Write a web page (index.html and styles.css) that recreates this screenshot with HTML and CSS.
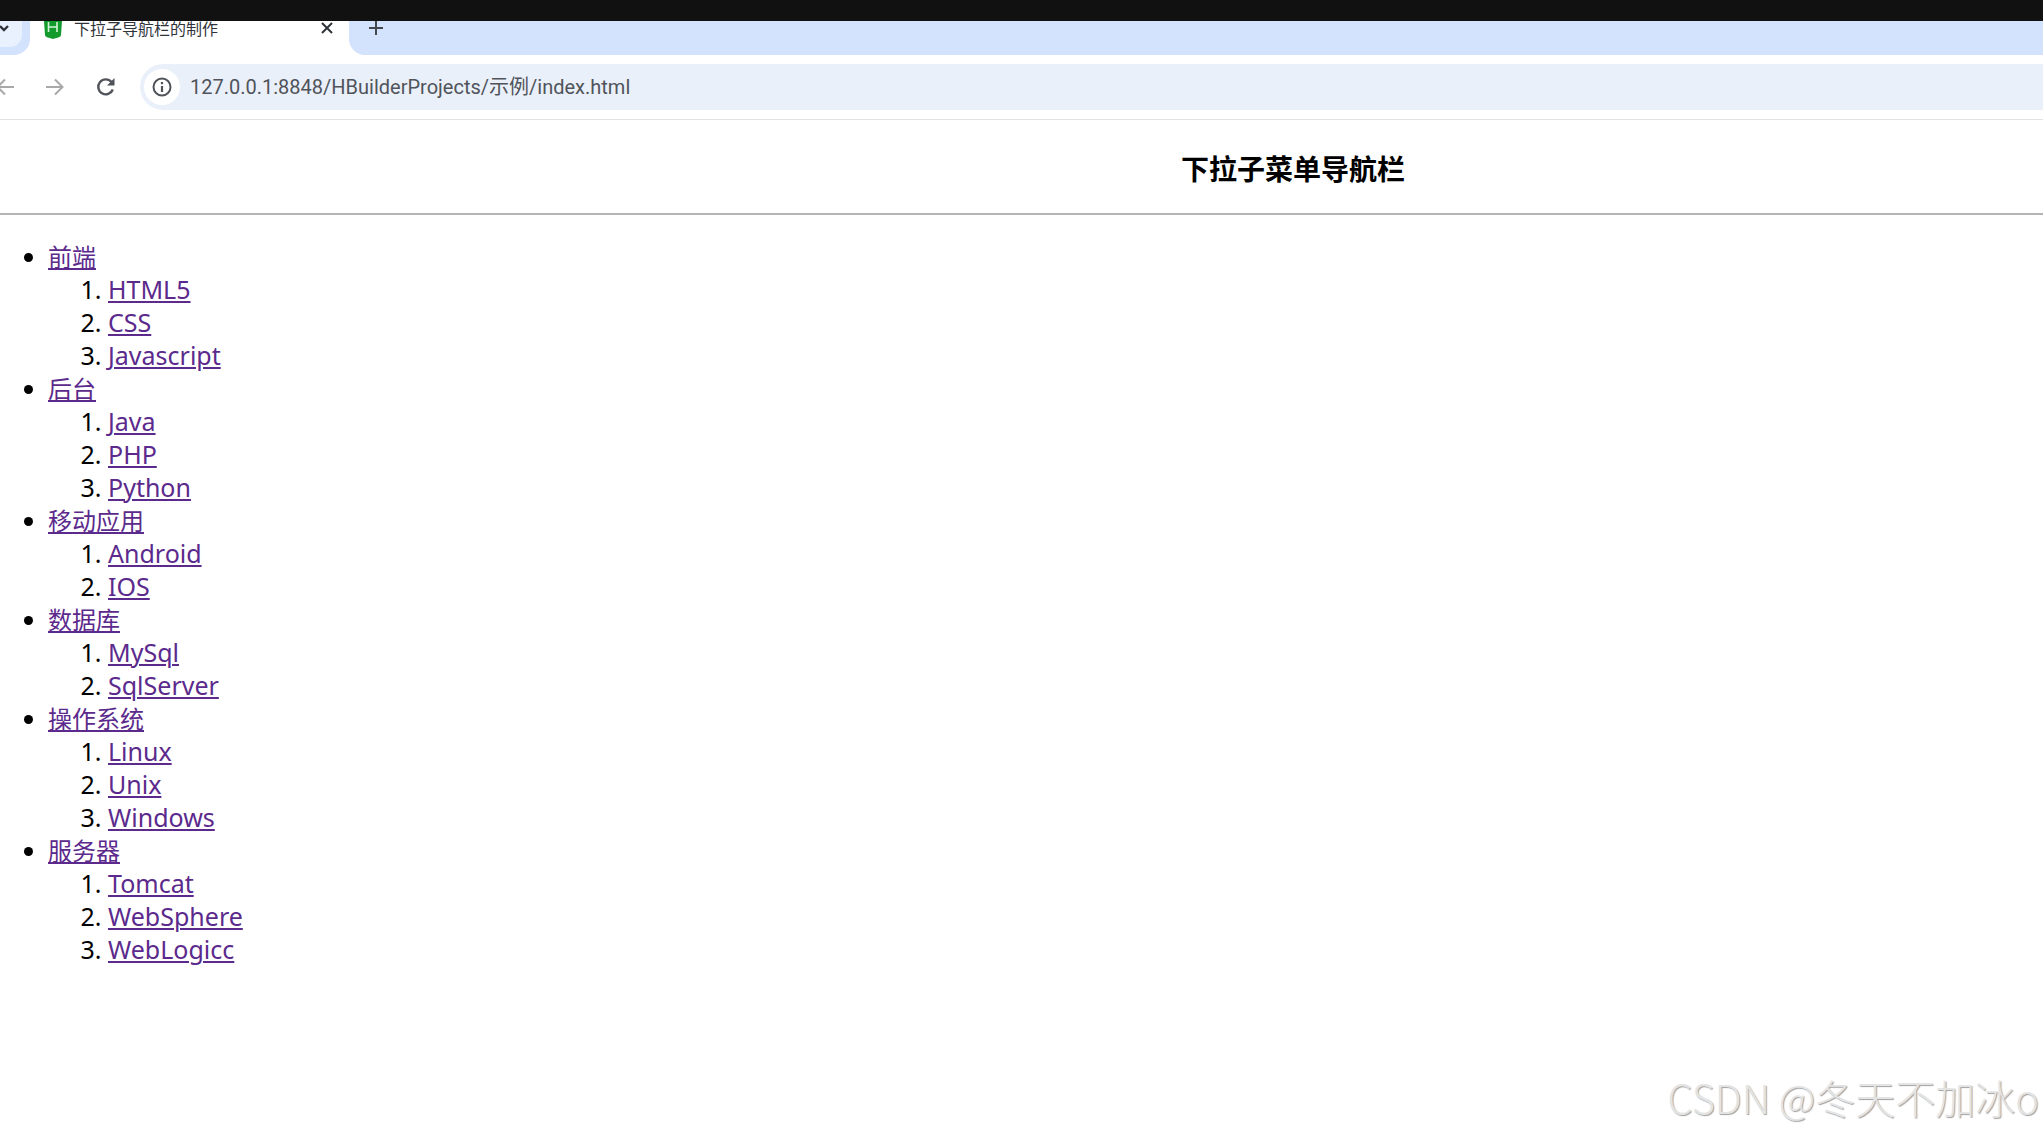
FILE: index.html
```html
<!DOCTYPE html>
<html lang="zh-CN">
<head>
    <meta charset="UTF-8">
    <meta name="viewport" content="width=device-width, initial-scale=1.0">
    <title>下拉子导航栏的制作</title>
    <link rel="stylesheet" href="styles.css">
</head>
<body>
    <header class="browser">
        <div class="tabs">
            <div class="tab-left">
                <button class="tab-search" aria-label="搜索标签页">
                    <svg width="12" height="12" viewBox="0 0 12 12"><path d="M0 3l4 4 4-4" fill="none" stroke="#30343a" stroke-width="2.4"/></svg>
                </button>
            </div>
            <div class="tab">
                <svg class="favicon" width="18" height="18" viewBox="0 0 18 18"><path d="M0 0h18l-1 14q0 1.500-2 2.200L9 18l-6-1.800Q1 15.500 1 14z" fill="#129a2c"/><path d="M4.500 1v10M13 1v10M4.500 6H13" fill="none" stroke="#d5f5d9" stroke-width="1.600"/></svg>
                <span class="tab-title">下拉子导航栏的制作</span>
                <button class="icon-button" aria-label="关闭">
                    <svg width="12" height="12" viewBox="0 0 12 12"><path d="M1 1l10 10M11 1L1 11" stroke="#30343a" stroke-width="2"/></svg>
                </button>
            </div>
            <div class="tab-rest">
                <button class="icon-button" aria-label="新标签页">
                    <svg width="16" height="14" viewBox="0 0 16 14"><path d="M8 0v14M1 7h14" stroke="#42474e" stroke-width="2"/></svg>
                </button>
            </div>
        </div>
        <div class="toolbar">
            <button class="icon-button" aria-label="后退">
                <svg width="18" height="18" viewBox="0 0 18 18"><path d="M18 9H2M9 1.500L1.500 9 9 16.500" fill="none" stroke="#a9a9a9" stroke-width="2"/></svg>
            </button>
            <button class="icon-button" aria-label="前进">
                <svg width="18" height="18" viewBox="0 0 18 18"><path d="M0 9h16M9 1.500L16.500 9 9 16.500" fill="none" stroke="#a9a9a9" stroke-width="2"/></svg>
            </button>
            <button class="icon-button" aria-label="刷新">
                <svg width="20" height="20" viewBox="0 0 20 20"><path d="M16.800 12.500A7.500 7.500 0 1 1 15.500 5l2 2.500" fill="none" stroke="#50545a" stroke-width="2.400"/><path d="M18.500 1v7.500H11z" fill="#50545a"/></svg>
            </button>
            <div class="address">
                <span class="site-info">
                    <svg width="20" height="20" viewBox="0 0 20 20"><circle cx="10" cy="10" r="8.500" fill="none" stroke="#50545a" stroke-width="2"/><path d="M10 9v6M10 5v2.300" stroke="#50545a" stroke-width="2.200"/></svg>
                </span>
                <input class="url" type="text" aria-label="地址" value="127.0.0.1:8848/HBuilderProjects/示例/index.html">
            </div>
        </div>
    </header>

    <main>
        <h3 class="title">下拉子菜单导航栏</h3>
        <hr>
        <ul class="nav">
            <li><a href="#">前端</a>
                <ol>
                    <li><a href="#">HTML5</a></li>
                    <li><a href="#">CSS</a></li>
                    <li><a href="#">Javascript</a></li>
                </ol>
            </li>
            <li><a href="#">后台</a>
                <ol>
                    <li><a href="#">Java</a></li>
                    <li><a href="#">PHP</a></li>
                    <li><a href="#">Python</a></li>
                </ol>
            </li>
            <li><a href="#">移动应用</a>
                <ol>
                    <li><a href="#">Android</a></li>
                    <li><a href="#">IOS</a></li>
                </ol>
            </li>
            <li><a href="#">数据库</a>
                <ol>
                    <li><a href="#">MySql</a></li>
                    <li><a href="#">SqlServer</a></li>
                </ol>
            </li>
            <li><a href="#">操作系统</a>
                <ol>
                    <li><a href="#">Linux</a></li>
                    <li><a href="#">Unix</a></li>
                    <li><a href="#">Windows</a></li>
                </ol>
            </li>
            <li><a href="#">服务器</a>
                <ol>
                    <li><a href="#">Tomcat</a></li>
                    <li><a href="#">WebSphere</a></li>
                    <li><a href="#">WebLogicc</a></li>
                </ol>
            </li>
        </ul>
    </main>

    <div class="watermark">CSDN @冬天不加冰o</div>
</body>
</html>
```
FILE: styles.css
```css
* {
    box-sizing: border-box;
}

body {
    margin: 0;
    min-height: 100vh;
    background-color: #fff;
    color: #000;
    font-family: "Noto Sans", "Noto Sans CJK SC", sans-serif;
    overflow: hidden;
}

button {
    padding: 0;
    border: none;
    background: none;
}

svg {
    display: block;
}

/* browser window */
.browser {
    border-top: 21px solid #111;
    border-bottom: 1px solid #e2e2e2;
}

.tabs {
    display: flex;
    height: 34px;
}

.tab-left {
    width: 30px;
    background-color: #d3e2fd;
    border-bottom-right-radius: 16px;
}

.tab-search {
    display: block;
    width: 22px;
    height: 26px;
    background-color: #e9f0fe;
    border-bottom-right-radius: 12px;
}

.tab-search svg {
    margin-bottom: 10px;
}

.tab {
    display: flex;
    align-items: flex-start;
    width: 319px;
    padding: 0 16px 0 14px;
}

.tab-title {
    flex: 1;
    margin-left: 12px;
    color: #30343a;
    font-size: 16px;
    line-height: 16px;
}

.tab .icon-button,
.tab-rest .icon-button {
    height: 14px;
}

.tab-rest {
    display: flex;
    align-items: flex-start;
    flex: 1;
    padding-left: 19px;
    background-color: #d3e2fd;
    border-bottom-left-radius: 16px;
}

.toolbar {
    display: flex;
    align-items: center;
    height: 64px;
    gap: 32px;
}

.toolbar .icon-button:first-child {
    margin-left: -4px;
}

.address {
    display: flex;
    flex: 1;
    align-items: center;
    height: 46px;
    margin-left: -8px;
    padding-left: 4px;
    background-color: #eaf0fa;
    border-radius: 23px 0 0 23px;
}

.site-info {
    display: flex;
    align-items: center;
    justify-content: center;
    width: 36px;
    height: 36px;
    border-radius: 50%;
    background-color: #fff;
}

.url {
    flex: 1;
    margin-left: 10px;
    padding: 0;
    border: none;
    outline: none;
    background: none;
    color: #50545a;
    font-family: Roboto, "Noto Sans CJK SC", sans-serif;
    font-size: 20px;
    line-height: 30px;
}

/* page, runs past the right edge of the window */
.title {
    margin: 28px 0 23px;
    padding-left: 543px;
    text-align: center;
    font-size: 28px;
    line-height: 42px;
}

hr {
    height: 2px;
    margin: 0;
    border: none;
    background-color: #b4b4b4;
}

.nav {
    margin: 25px 0 0;
    padding-left: 48px;
    font-size: 24px;
    line-height: 33px;
}

.nav ol {
    margin: 0;
    padding-left: 60px;
    font-size: 25px;
}

.nav a {
    color: #5b2a8c;
    text-decoration-thickness: 2px;
    text-underline-offset: 2px;
}

.watermark {
    position: absolute;
    right: 4px;
    bottom: 9px;
    color: #e4e4e4;
    font-family: "Noto Sans CJK SC", sans-serif;
    font-size: 40px;
    font-weight: 300;
    text-shadow: 1px 1px 1px #a0a0a0;
}
```
